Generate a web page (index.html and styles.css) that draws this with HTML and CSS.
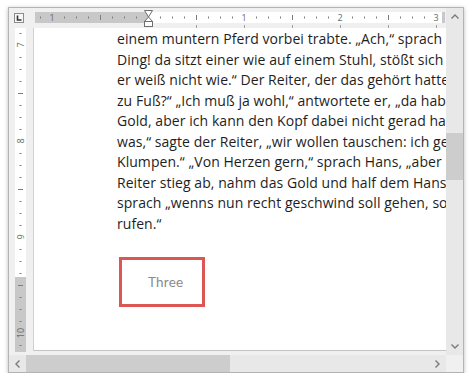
FILE: index.html
```html
<!DOCTYPE HTML>
<html>
<head>
	<title>Rich Edit</title>
	<meta charset="UTF-8">
	<link rel="stylesheet" href="styles.css">
</head>
<body>

<div class="editor">

	<!-- tab selector in the corner -->
	<div class="corner">
		<svg class="tab-btn" width="10" height="10" viewBox="0 0 10 10">
			<rect x="0.5" y="0.5" width="9" height="9" fill="#f7f7f7" stroke="#8c8c8c"/>
			<path d="M3.5 2.5v4.5h4" fill="none" stroke="#333" stroke-width="1.6"/>
		</svg>
	</div>

	<!-- horizontal ruler -->
	<div class="hruler">
		<svg width="413" height="20" viewBox="0 0 413 20">
			<rect x="2" y="4" width="410" height="11" fill="#c8c8c8"/>
			<rect x="115" y="4" width="294" height="11" fill="#fff"/>
			<path stroke="#7d7d7d" stroke-width="1" d="M7.5 8.5v2M31.5 8.5v2M43.5 8.5v2M55.5 8.5v2M79.5 8.5v2M91.5 8.5v2M103.5 8.5v2M127.5 8.5v2M139.5 8.5v2M151.5 8.5v2M175.5 8.5v2M187.5 8.5v2M199.5 8.5v2M223.5 8.5v2M235.5 8.5v2M247.5 8.5v2M271.5 8.5v2M283.5 8.5v2M295.5 8.5v2M319.5 8.5v2M331.5 8.5v2M343.5 8.5v2M367.5 8.5v2M379.5 8.5v2M391.5 8.5v2"/>
			<path stroke="#7d7d7d" stroke-width="1" d="M67.5 7v5M163.5 7v5M259.5 7v5M355.5 7v5"/>
			<path stroke="#a0a0a0" stroke-width="1" d="M163.5 17v3M211.5 17v3M259.5 17v3M307.5 17v3M355.5 17v3M403.5 17v3"/>
			<g class="rnum">
				<text x="19" y="12.5">1</text>
				<text x="211" y="12.5">1</text>
				<text x="307" y="12.5">2</text>
				<text x="403" y="12.5">3</text>
			</g>
			<path d="M111.5 2.5h8l-4 6.5z" fill="#fff" stroke="#6e6e6e"/>
			<path d="M115.5 9l4 4.5h-8z" fill="#fff" stroke="#6e6e6e"/>
			<rect x="111.5" y="13.5" width="8" height="5" fill="#fff" stroke="#6e6e6e"/>
		</svg>
	</div>

	<!-- vertical scrollbar -->
	<div class="vscroll">
		<div class="arrow">
			<svg width="8" height="5" viewBox="0 0 8 5"><path d="M0.5 4.5l3.5-3.5 3.5 3.5" fill="none" stroke="#7a7a7a" stroke-width="1.4"/></svg>
		</div>
		<div class="vtrack"><div class="vthumb"></div></div>
		<div class="arrow">
			<svg width="8" height="5" viewBox="0 0 8 5"><path d="M0.5 0.5l3.5 3.5 3.5-3.5" fill="none" stroke="#7a7a7a" stroke-width="1.4"/></svg>
		</div>
	</div>

	<!-- vertical ruler -->
	<div class="vruler">
		<svg width="24" height="327" viewBox="0 0 24 327">
			<rect x="6" y="0" width="11" height="324" fill="#fff"/>
			<rect x="6" y="249" width="11" height="75" fill="#c8c8c8"/>
			<path stroke="#7d7d7d" stroke-width="1" d="M10.5 5.5h2M10.5 29.5h2M10.5 41.5h2M10.5 53.5h2M10.5 77.5h2M10.5 89.5h2M10.5 101.5h2M10.5 125.5h2M10.5 137.5h2M10.5 149.5h2M10.5 173.5h2M10.5 185.5h2M10.5 197.5h2M10.5 221.5h2M10.5 233.5h2M10.5 245.5h2M10.5 269.5h2M10.5 281.5h2M10.5 293.5h2M10.5 317.5h2"/>
			<path stroke="#7d7d7d" stroke-width="1" d="M9 65.5h5M9 161.5h5M9 257.5h5"/>
			<g class="rnum">
				<text x="11.5" y="17" transform="rotate(-90 11.5 17)" dy="3">7</text>
				<text x="11.5" y="113" transform="rotate(-90 11.5 113)" dy="3">8</text>
				<text x="11.5" y="209" transform="rotate(-90 11.5 209)" dy="3">9</text>
				<text x="11.5" y="305" transform="rotate(-90 11.5 305)" dy="3">10</text>
			</g>
		</svg>
	</div>

	<!-- document view -->
	<div class="view">
		<div class="page">
			<p class="para">einem muntern Pferd vorbei trabte. „Ach,“ sprach er ganz laut,<br>
			Ding! da sitzt einer wie auf einem Stuhl, stößt sich an keinen<br>
			er weiß nicht wie.“ Der Reiter, der das gehört hatte, hielt an<br>
			zu Fuß?“ „Ich muß ja wohl,“ antwortete er, „da habe ich einen<br>
			Gold, aber ich kann den Kopf dabei nicht gerad halten, auch<br>
			was,“ sagte der Reiter, „wir wollen tauschen: ich gebe dir mein<br>
			Klumpen.“ „Von Herzen gern,“ sprach Hans, „aber ich sage<br>
			Reiter stieg ab, nahm das Gold und half dem Hans hinauf, gab<br>
			sprach „wenns nun recht geschwind soll gehen, so mußt du mit<br>
			rufen.“</p>
			<div class="box">Three</div>
		</div>
	</div>

	<!-- horizontal scrollbar -->
	<div class="hscroll">
		<div class="arrow">
			<svg width="5" height="8" viewBox="0 0 5 8"><path d="M4.5 0.5l-3.5 3.5 3.5 3.5" fill="none" stroke="#7a7a7a" stroke-width="1.4"/></svg>
		</div>
		<div class="hthumb"></div>
		<div class="htrack"></div>
		<div class="arrow">
			<svg width="5" height="8" viewBox="0 0 5 8"><path d="M0.5 0.5l3.5 3.5-3.5 3.5" fill="none" stroke="#7a7a7a" stroke-width="1.4"/></svg>
		</div>
	</div>

	<div class="grip"></div>

</div>

</body>
</html>
```

FILE: styles.css
```css
body {
	margin: 0;
	background: #fff;
	font-family: "Open Sans", "Liberation Sans", sans-serif;
}

.editor {
	margin: 7px 0 0 8px;
	width: 456px;
	height: 366px;
	box-sizing: border-box;
	border: 1px solid #b4b4b4;
	box-shadow: 0 1px 4px rgba(0, 0, 0, 0.28);
	background: #f0f0f0;
	display: grid;
	grid-template-columns: 24px 413px 17px;
	grid-template-rows: 20px 327px 17px;
}

.corner {
	grid-column: 1;
	grid-row: 1;
	padding: 5px 0 0 5px;
}

.tab-btn {
	display: block;
}

.hruler {
	grid-column: 2;
	grid-row: 1;
}

.hruler svg,
.vruler svg {
	display: block;
}

.rnum text {
	font-family: "Open Sans", sans-serif;
	font-size: 9px;
	fill: #6a6a6a;
	text-anchor: middle;
}

.vruler {
	grid-column: 1;
	grid-row: 2;
}

.vscroll {
	grid-column: 3;
	grid-row: 1 / 3;
	display: flex;
	flex-direction: column;
	background: #e8e8e8;
}

.arrow {
	flex: none;
	width: 17px;
	height: 17px;
	display: flex;
	align-items: center;
	justify-content: center;
}

.arrow svg {
	display: block;
}

.vtrack {
	flex: 1;
}

.vthumb {
	margin-top: 108px;
	height: 47px;
	background: #cdcdcd;
}

.view {
	grid-column: 2;
	grid-row: 2;
	overflow: hidden;
}

.page {
	width: 640px;
	height: 323px;
	box-sizing: border-box;
	background: #fff;
	border-left: 1px solid #cfcfcf;
	border-bottom: 1px solid #c4c4c4;
	padding: 1px 0 0 83px;
}

.para {
	margin: 0;
	white-space: nowrap;
	font-size: 14px;
	letter-spacing: 0.06px;
	line-height: 20.5px;
	color: #1e1e1e;
}

.box {
	margin: 23px 0 0 2px;
	width: 86px;
	height: 50px;
	box-sizing: border-box;
	border: 3px solid #dc5753;
	padding-left: 26px;
	display: flex;
	align-items: center;
	font-family: Lato, sans-serif;
	font-size: 13.5px;
	letter-spacing: 0.2px;
	color: #8a8a8a;
}

.hscroll {
	grid-column: 1 / 3;
	grid-row: 3;
	display: flex;
	background: #e8e8e8;
}

.hthumb {
	width: 204px;
	background: #cdcdcd;
}

.htrack {
	flex: 1;
}

.grip {
	grid-column: 3;
	grid-row: 3;
	background: #f0f0f0;
}
```
